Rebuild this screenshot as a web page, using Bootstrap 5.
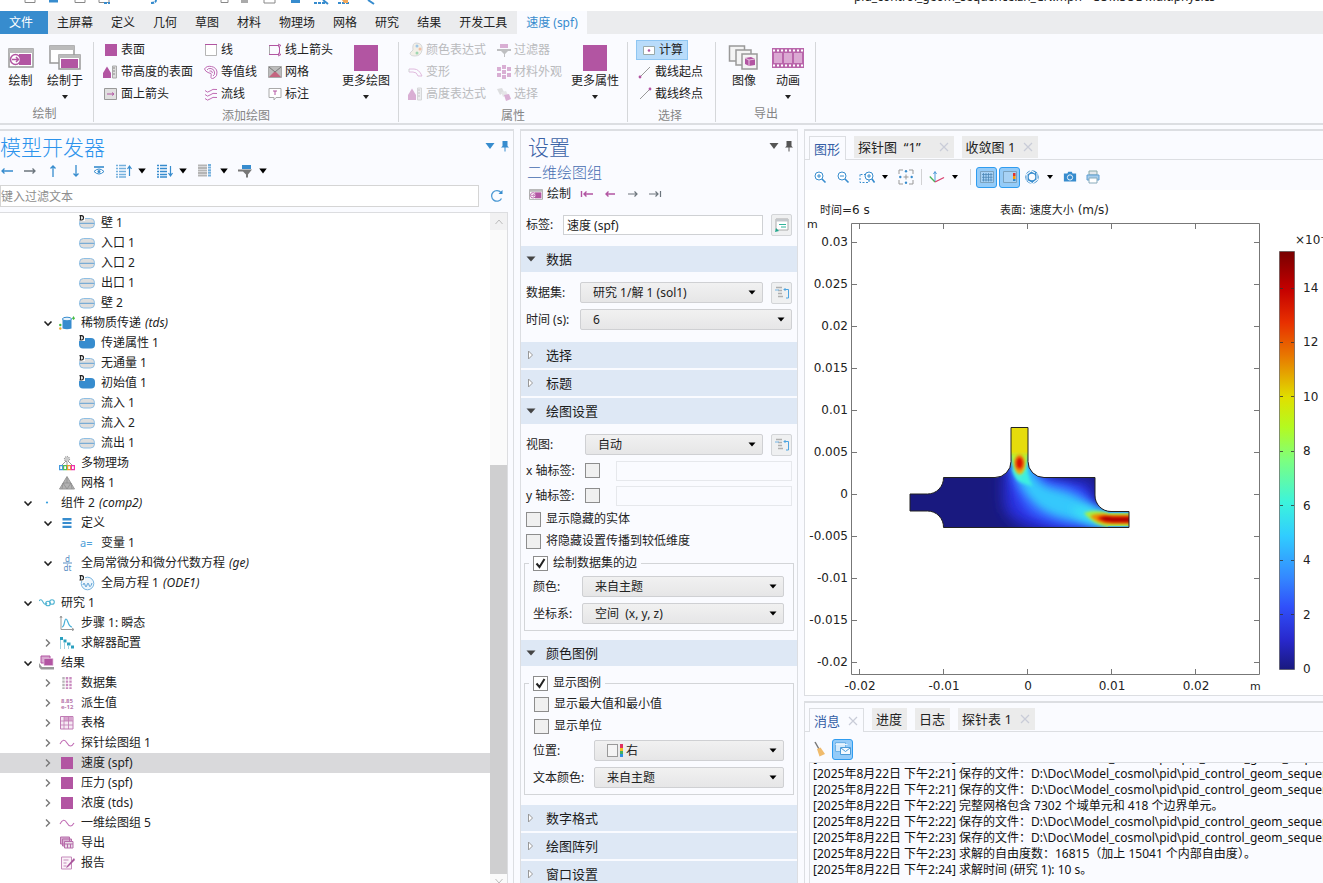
<!DOCTYPE html>
<html lang="zh-CN">
<head>
<meta charset="utf-8">
<meta name="viewport" content="width=device-width, initial-scale=1">
<title>pid_control_geom_sequence.zh_CN.mph - COMSOL Multiphysics</title>
<link href="https://cdn.jsdelivr.net/npm/bootstrap@5.3.0/dist/css/bootstrap.min.css" rel="stylesheet">
<style>
:root{--ui:"Noto Sans","Noto Sans CJK SC",sans-serif;--line:#dcdee2;--bg:#fafbff;--blue:#378cce;--mag:#b255a2;--navy:#3b62a6}
body{font-family:var(--ui);font-size:12px;line-height:16px;color:#222;background:var(--bg)}
button,input,select{font:inherit;color:inherit}
button{border:0;background:none;padding:0}
svg{display:block;flex:none}
.i16{width:16px;height:16px}
.i14{width:14px;height:14px}
.i18{width:18px;height:14px}
.i13{width:14px;height:11px}
.car{width:8px;height:8px}
.car10{width:10px;height:10px}
.car12{width:12px;height:12px}
.pinbox{width:10px;height:12px}
.titlebar{height:11px;background:#fff}
.quick{height:7px;width:390px;margin-left:13px}
.doc{margin-right:108px;line-height:16px;height:16px;margin-top:-11px}
.tabstrip{height:23px;background:#ebecee}
.rtab{padding:0 9px;line-height:23px;color:#222}
.rtab.file{background:var(--blue);color:#fff;width:48px;text-align:left}
.rtab.cur{background:var(--bg);color:var(--blue);margin-left:1px}
.ribbon{height:91px;border-bottom:2px solid var(--line);padding-top:4px}
.grp{display:flex;flex-direction:column;height:80px;border-right:1px solid #d5d7da;margin-top:4px;padding:0 8px}
.grp.first{padding:0 4px 0 0}
.grp.pickers{padding-right:11px}
.grp.out{padding:0 5px 0 6px}
.grp-body{display:flex;height:66px;margin-top:-3px}
.grp-name{color:#858585;text-align:center;line-height:16px;margin-top:3px}
.cmds{display:grid;grid-template-rows:repeat(3,22px);grid-auto-flow:column;justify-content:start;column-gap:8px}
.cmd{display:flex;align-items:center;gap:2px;height:22px;padding:0 1px;white-space:nowrap}
.cmd:disabled{color:#b9babd}
.cmd:disabled svg{opacity:.45}
.cmd.on{background:#b9dcfa;border:1px solid #8fc6f2;height:20px;margin-top:1px;width:52px;padding:0 4px}
.big{display:flex;flex-direction:column;align-items:center;white-space:nowrap;padding-top:6px;width:48px}
.big.w41{width:41px}.big.w44{width:44px}
.big .pic{width:32px;height:26px;margin-bottom:2px}
.big .car{margin-top:4px}
.work{display:grid;grid-template-columns:minmax(0,514fr) minmax(0,278fr) minmax(0,519fr);gap:6px;margin-top:4px;min-height:0}
.pane{border:1px solid var(--line);border-top-width:2px;overflow:hidden;min-width:0;min-height:0}
.ptitle{font-size:21px;line-height:28px;font-weight:300;margin:2px 0 0}
.phead{display:flex;justify-content:space-between;padding-right:3px}
.pbtns{display:flex;gap:4px;margin-top:9px}
.treepane{border-left:0;border-bottom:0}
.treepane .phead,.ttools{color:var(--blue)}
.treepane .ptitle{color:#2c93ec}
.ttools{height:20px;align-items:center;gap:9px}
.drop{display:flex;align-items:center;gap:4px;color:#000}
.frowtop{display:flex;align-items:center;gap:11px;padding-right:9px;margin:4px 0 5px}
.filter{height:22px;border:1px solid #d5d5d5;border-radius:0;padding:0;background:#fff;width:100px;flex:1 1 auto}
.filter::placeholder{color:#8e8e8e}
.treebox{border:1px solid #dcdde0;border-left:0;border-bottom:0;background:#fff;margin-right:5px;min-height:0}
.tree{list-style:none;margin:0;padding:0;overflow:hidden}
.tree li{display:flex;align-items:center;height:20px;white-space:nowrap}
.tree li.sel{background:#d9d9db}
.tree li>svg{margin-right:6px}
.tree i{margin-left:4px}
.tree .tw{width:20px;height:20px;margin:0;padding:5px 6px 5px 4px}
.l1{padding-left:19px}.l2{padding-left:39px}.l3{padding-left:59px}
.tree li>svg:first-child:not(.tw){margin-left:20px}
.sbar{width:17px;background:#fafafa}
.sbar .cap{height:17px;background:#f1f1f2}
.sbar .gap1{flex:236}.sbar .thumb{flex:410;background:#cfcfd0}.sbar .endcap{height:9px}
.prop{overflow:hidden;border-bottom:0}
.prop .phead{padding-left:7px;color:#555}
.prop .ptitle{color:var(--navy)}
.sub{color:#446bb0;font-size:15px;line-height:23px;font-weight:300;padding-left:6px}
.ptools{display:flex;align-items:center;height:20px;padding-left:8px;gap:9px;color:var(--mag)}
.ptools .text-secondary{margin-right:-1px}
.sec{height:26px;margin-bottom:2px;background:#dee8f5;font-size:13px;line-height:26px;padding:0 5px;color:#1c1c1c;width:100%;text-align:left;display:flex;align-items:center;gap:10px}
.sbody{padding:5px 0 9px}
.sbody.lead7{padding:7px 0 10px}
.frow{display:flex;align-items:center;padding:0 5px}
.frow label{flex:none}
.w1{width:37px}.w2{width:54px}.w3{width:59px}.w4{width:49px}.w5{width:61px}
.h42{height:42px}.h27{height:27px}.h25{height:25px}.h22{height:22px}
.frow.tick{gap:5px}
.txt{height:20px;border:1px solid #cfd1d4;background:#fff;padding:0 3px;min-width:0;flex:1;border-radius:0}
.txt:disabled{background:var(--bg);border-color:#e6e8ec}
.sel1{height:21px;flex:1;min-width:0;appearance:none;border:1px solid #cfd0d3;border-radius:2px;padding:0 20px 0 12px;background:url("data:image/svg+xml,%3Csvg xmlns='http://www.w3.org/2000/svg' width='8' height='5'%3E%3Cpath d='M.5 .5h7L4 4.5z'/%3E%3C/svg%3E") no-repeat right 6px center,linear-gradient(#f1f1f1,#e6e6e7)}
.sel1.legend-pos{padding-left:31px;background:url("data:image/svg+xml,%3Csvg xmlns='http://www.w3.org/2000/svg' width='8' height='5'%3E%3Cpath d='M.5 .5h7L4 4.5z'/%3E%3C/svg%3E") no-repeat right 6px center,url("data:image/svg+xml,%3Csvg xmlns='http://www.w3.org/2000/svg' width='16' height='13'%3E%3Crect x='.5' y='.5' width='10' height='12' fill='%23f4f4f4' stroke='%23999'/%3E%3Cpath fill='%23e03060' d='M13 0h3v4h-3z'/%3E%3Cpath fill='%23f0c020' d='M13 4h3v3h-3z'/%3E%3Cpath fill='%2340b060' d='M13 7h3v3h-3z'/%3E%3Cpath fill='%233090e0' d='M13 10h3v3h-3z'/%3E%3C/svg%3E") no-repeat 12px center,linear-gradient(#f1f1f1,#e6e6e7)}
.gbtn{width:21px;height:22px;border:1px solid #d3d5d8;border-radius:2px;background:#eff0f1;display:flex;align-items:center;justify-content:center;margin-left:8px;flex:none}
.ck{appearance:none;width:15px;height:15px;margin:0;border:1px solid #8d8d8d;background:#f0f0f0;flex:none}
.ck:checked{background:#fff url("data:image/svg+xml,%3Csvg xmlns='http://www.w3.org/2000/svg' width='13' height='13'%3E%3Cpath d='M2.500 6.500l3 3.500 5-8' fill='none' stroke='%23222' stroke-width='2'/%3E%3C/svg%3E")}
.fs{border:1px solid #d3d5d8;margin:0 3px;padding:2px 9px 3px 8px;min-width:0}
.edges{margin-top:3px}
.fs legend{float:none;width:auto;font-size:12px;line-height:16px;margin:0 0 0 -4px;padding:0 4px;display:flex;align-items:center;gap:5px;background:var(--bg)}
.fs .frow{padding:0}
.fs .tick{padding-left:1px}
.tabs2{display:flex;align-items:flex-end;height:29px;border-bottom:1px solid var(--line);padding-left:4px;font-size:13px;gap:8px;flex:none}
.tb{background:#ebebeb;height:22px;padding:0 5px 0 4px;white-space:nowrap;display:flex;align-items:center;margin-bottom:1px;color:#222;line-height:22px}
.tb.cur{background:var(--bg);border:1px solid var(--line);border-bottom:0;height:24px;margin-bottom:-1px;color:#355ea6}
.tb svg{width:10px;height:10px;margin-left:8px}
.tb .far{margin-left:18px}
.gtools{height:30px;display:flex;align-items:center;padding:4px 6px 0 8px;gap:9px}
.gtools .drop{gap:6px}
.gtools .toggles{display:flex;gap:2px}
.gtools .after{margin-left:-5px}
.mtools{height:30px;display:flex;align-items:center;padding:4px 0 0 7px;gap:4px}
.tog{width:21px;height:21px;border:1px solid #2f9cf0;border-radius:3px;background:#94cbf8;display:flex;align-items:center;justify-content:center}
.vsep{width:1px;height:16px;background:#d2d2d4;margin:0 -2px}
.vsep.wide{margin:0 -4px 0 2px}
.plot{background:#fff;min-height:0}
.plot text{font-family:"DejaVu Sans","Noto Sans CJK SC",sans-serif;font-size:12px;fill:#222}
.plot .zh,.plot .unit{font-size:11px}
.plot .sup{font-size:9px}
.rightcol{display:grid;grid-template-rows:568fr 182fr;gap:5px;min-height:0}
.log{border:1px solid var(--line);border-width:1px 0 0 1px;margin-left:4px;padding:0 3px 5px;overflow:hidden;display:flex;flex-direction:column;justify-content:flex-end;color:#111;min-height:0}
.log div{white-space:nowrap;line-height:16px;flex:none}
</style>
<script src="https://cdn.jsdelivr.net/npm/bootstrap@5.3.0/dist/js/bootstrap.bundle.min.js"></script>
</head>
<body class="vh-100 overflow-hidden d-flex flex-column">
<svg width="0" height="0" class="position-absolute" aria-hidden="true">
<defs>
<symbol id="car" viewBox="0 0 8 8"><path d="M1 2h6L4 6z" fill="currentColor"/></symbol>
<symbol id="carR" viewBox="0 0 10 10"><path d="M2.500 1v8L6.500 5z" fill="#fff" stroke="#999"/></symbol>
<symbol id="carD" viewBox="0 0 10 10"><path d="M.5 2.500h9L5 7.500z" fill="#444"/></symbol>
<symbol id="pin" viewBox="0 0 10 12"><path d="M2.500 1h5v5l1.500 1.500H1L2.500 6zM4.500 7h1v4.500h-1z" fill="currentColor"/></symbol>
<symbol id="open" viewBox="0 0 10 10"><path d="M1.500 3.500 5 7l3.500-3.500" fill="none" stroke="#222" stroke-width="1.600"/></symbol>
<symbol id="shut" viewBox="0 0 10 10"><path d="M3 1.500 6.500 5 3 8.500" fill="none" stroke="#777" stroke-width="1.400"/></symbol>
<symbol id="bd" viewBox="0 0 16 16"><rect x=".5" y="3.500" width="15" height="9.500" rx="4" fill="#dedede" stroke="#8fbfe4"/><path d="M1 8.300h14" stroke="#5f9fd2"/></symbol>
<symbol id="dd" viewBox="0 0 16 16"><path d="M0 0h6v6H0z" fill="#fff"/><path d="M1.500.7v4.300M.5.700h2.200q1.800 0 1.800 2.100t-1.800 2.200H.5" fill="none" stroke="#222" stroke-width="1.200"/></symbol>
<symbol id="bdd" viewBox="0 0 16 16"><use href="#bd"/><use href="#dd"/></symbol>
<symbol id="dom" viewBox="0 0 16 16"><rect y="3" width="16" height="10.500" rx="4" fill="var(--blue)"/><use href="#dd"/></symbol>
<symbol id="tds" viewBox="0 0 16 16"><path d="M3.500 3.500v10q4.500 1.500 9 0v-10z" fill="var(--blue)"/><ellipse cx="8" cy="4" rx="4.500" ry="1.800" fill="#e6f2fb" stroke="var(--blue)"/><circle cx="1.300" cy="10" r="1.200" fill="#4b4"/><circle cx="1.300" cy="13.500" r="1.200" fill="#ea3"/><path d="m14.500 1 1.500 2.500-1.500 1.500-1.500-1.500z" fill="#4b4"/></symbol>
<symbol id="mp" viewBox="0 0 16 16"><circle cx="8" cy="4" r="2.600" fill="#ccc" stroke="#888" stroke-dasharray="1 1"/><path d="M3 10 7 6m2 0 4 4M8 7v3" stroke="#999"/><g fill="#fff" stroke-width="1.200"><path d="M.6 10.600h3v4h-3z" stroke="#49d"/><path d="M4.600 10.600h3v4h-3z" stroke="#5b5"/><path d="M8.600 10.600h3v4h-3z" stroke="#e93"/><path d="M12.400 10.600h3v4h-3z" stroke="#e3a"/></g></symbol>
<symbol id="mesh" viewBox="0 0 16 16"><path d="M8 1.500 15.500 14H.5z" fill="#b2b2b2" stroke="#999"/><path d="M4 8l4 6 4-6zM8 2v6M4 8l-1 6m9-6 1 6" fill="none" stroke="#8a8a8a" stroke-width=".7"/></symbol>
<symbol id="dot" viewBox="0 0 16 16"><circle cx="8" cy="7.500" r="1.100" fill="#38a0e0"/></symbol>
<symbol id="defs" viewBox="0 0 16 16"><path d="M3.500 3h9v2.500h-9zM3.500 7h9v2h-9zM3.500 10.800h9V13h-9z" fill="var(--blue)"/></symbol>
<symbol id="aeq" viewBox="0 0 16 16"><text x="1" y="12" font-size="11" fill="#4f9fd8">a=</text></symbol>
<symbol id="ddt" viewBox="0 0 16 16"><path d="M4 8h9" stroke="#5a8fc4"/><text x="6" y="6.800" font-size="8" fill="#5a8fc4">d</text><text x="4.500" y="15.500" font-size="8" fill="#5a8fc4">dt</text></symbol>
<symbol id="ode" viewBox="0 0 16 16"><circle cx="8.500" cy="8.500" r="6.300" fill="#eef6fc" stroke="#78b4e0"/><path d="M4 10q1-4 2 0t2 0q1-4 2 0t3-2" fill="none" stroke="#5a9fd4"/><use href="#dd"/></symbol>
<symbol id="study" viewBox="0 0 16 16"><g fill="none" stroke="#4fb3d2" stroke-width="1.100"><path d="M0 6q2-3 4 1t4 1"/><circle cx="9" cy="8.500" r="2.300"/><circle cx="13" cy="7" r="2.300"/></g></symbol>
<symbol id="step" viewBox="0 0 16 16"><path d="M2 1v13.500h13" fill="none" stroke="#999"/><path d="M3 12C6 12 5 4 7 4s2 8 6 8" fill="none" stroke="#49b0d8" stroke-width="1.200"/><path d="m1 3 1-2 1 2m10 10 2 1.500-2 1.500" fill="none" stroke="#999"/></symbol>
<symbol id="solv" viewBox="0 0 16 16"><path d="M1 2h3v3H1zM4.500 4.500h3v3h-3zM8 7.500h3.500v3H8zM12 10.500h3v3h-3z" fill="#2aa0bf"/><path d="M1.500 5v9m4-6v6m4-4v4" stroke="#9fd2e0"/></symbol>
<symbol id="res" viewBox="0 0 16 16"><path d="M2 1h9v7H2z" fill="#d9a8d1" stroke="#b255a2"/><path d="M5 3.500h9v7H5z" fill="#b255a2" stroke="#e3c0dd" stroke-width=".7"/><path d="M0 8l3 4h12v2.500H2L0 12z" fill="#999"/></symbol>
<symbol id="dset" viewBox="0 0 16 16"><g stroke-width="2.400" stroke-dasharray="2.400 1"><path d="M4.500 2v12" stroke="#b5b5b5"/><path d="M8 2v12M11.500 2v12" stroke="#c98bbf"/></g></symbol>
<symbol id="dval" viewBox="0 0 16 16"><text x="2" y="7.500" font-size="6" font-weight="700" fill="#b878ac">8.85</text><text x="2" y="13.500" font-size="6" font-weight="700" fill="#b878ac">e-12</text></symbol>
<symbol id="tbl" viewBox="0 0 16 16"><path d="M1.500 1.500h12.500V14H1.500z" fill="#f6eaf4" stroke="#c07bb4"/><path d="M5 2h9v4H5z" fill="#d7a5ce"/><path d="M5 2v12M9.500 2v12M2 6h12M2 10h12" stroke="#c07bb4" stroke-width=".8"/></symbol>
<symbol id="wave" viewBox="0 0 16 16"><path d="M1 9q3.500-7 7-1t7 0" fill="none" stroke="#c06cb4" stroke-width="1.100"/></symbol>
<symbol id="sq" viewBox="0 0 16 16"><path d="M2 2h12v12H2z" fill="#b255a2"/></symbol>
<symbol id="exp" viewBox="0 0 16 16"><path d="M1.500 2h9v7h-9zM3.500 4h9v7h-9z" fill="#d9aed2" stroke="#b66daa"/><path d="M5.500 6.500H14V13H5.500z" fill="#eadde8" stroke="#b66daa"/><path d="M6 9h8M8.500 9v4M11.500 9v4" stroke="#b66daa"/></symbol>
<symbol id="rep" viewBox="0 0 16 16"><path d="M2.500 2h10v12h-10z" fill="#faf2f8" stroke="#c58abb"/><path d="M4.500 5h5m-5 3h3m-3 3h3" stroke="#c58abb"/><path d="m15 3-7 8-1 2 2-1 7-7z" fill="#a9569c"/></symbol>
<symbol id="draw" viewBox="0 0 26 20"><path d="M1 1h24v18H1z" fill="#fff" stroke="#999" stroke-width="1.500"/><path d="M1 1h24v4H1z" fill="#bbb"/><path d="M11 6h12v11H11z" fill="#b255a2"/><circle cx="7.500" cy="11.500" r="5" fill="#fff" stroke="#b255a2" stroke-width="1.500"/><path d="M4 11.500h6M8 9l2.500 2.500L8 14" fill="none" stroke="#b255a2" stroke-width="1.500"/></symbol>
<symbol id="drawin" viewBox="0 0 32 26"><path d="M1 1h24v17H1z" fill="#fff" stroke="#999" stroke-width="1.500"/><path d="M1 1h24v4H1z" fill="#bbb"/><path d="M10 10h21v14H10z" fill="#fff" stroke="#999" stroke-width="1.500"/><path d="M10 10h21v3H10z" fill="#bbb"/><path d="M12 14h17v9H12z" fill="#b255a2"/></symbol>
<symbol id="hsurf" viewBox="0 0 16 16"><path d="M0 14V9l4-6.500L8 9v5z" fill="#b255a2"/><path d="M9.500 2h4v12h-4z" fill="#ddd" stroke="#aaa"/><path d="M10 4h2m-2 3h2m-2 3h2" stroke="#888"/></symbol>
<symbol id="arrs" viewBox="0 0 16 16"><path d="M1.500 2.500h12v11h-12z" fill="#e0e0e0" stroke="#999"/><path d="M4 8h6M9 6.500l2 1.500-2 1.500" fill="none" stroke="#b255a2"/></symbol>
<symbol id="linei" viewBox="0 0 16 16"><path d="M2.500 2.500h11v11h-11z" fill="#fff" stroke="#b5b5b5"/><path d="M2 2.500h12" stroke="#b255a2"/></symbol>
<symbol id="cont" viewBox="0 0 16 16"><g fill="none" stroke="#c06cb4"><path d="M1.500 5q2-3.500 7-2.500t5.500 5.500-3 6-3-1.500 0-3-3-1-3.500-3.500z"/><path d="M4 6q1-2 4-1.500t3.500 3.500-1.500 4"/><path d="M6.500 7q2.500-1 3 2"/></g></symbol>
<symbol id="strm" viewBox="0 0 16 16"><path d="M2 4.500q2.500 3 5 .5t7-1.500M2 8.500q2.500 3 5 .5t7-1.500M2 12.500q2.500 3 5 .5t7-1.500" fill="none" stroke="#c06cb4"/></symbol>
<symbol id="larr" viewBox="0 0 16 16"><path d="M2.500 3.500v9" stroke="#aaa"/><path d="M2 3.500h10M2 12.500h10M11 2l3 1.500L11 5m0 6 3 1.500-3 1.500M12.500 5v6" stroke="#b255a2" fill="none"/></symbol>
<symbol id="grid" viewBox="0 0 16 16"><path d="M1.500 2.500h13v11h-13z" fill="#bcbcbc" stroke="#aaa"/><path d="m2 13 6-6 6 6z" fill="#c4647f"/><path d="m2 3 6 5 6-5" fill="none" stroke="#777"/></symbol>
<symbol id="note" viewBox="0 0 16 16"><path d="M2 2.500h12v9H9l-2 2.500v-2.500H2z" fill="#fff" stroke="#aaa"/><path d="M6 5h4M8 5v4" stroke="#b255a2"/></symbol>
<symbol id="pal" viewBox="0 0 16 16"><path d="M8 1q7 0 6 7-1 6-7 6-5 0-5-3l3-3q-1-7 3-7z" fill="#e9e2cc" stroke="#aaa"/><circle cx="9" cy="4" r="1.500" fill="#38c"/><circle cx="12" cy="7" r="1.500" fill="#e73"/><circle cx="9" cy="11" r="1.500" fill="#3a5"/></symbol>
<symbol id="defm" viewBox="0 0 16 16"><path d="M1 5h5q5 0 8 7M1 8h4q4 0 5 4h4" fill="none" stroke="#c06cb4"/><path d="M1 5v3" stroke="#999"/></symbol>
<symbol id="filt" viewBox="0 0 16 16"><path d="M4 2h8v4H4z" fill="#b255a2"/><path d="M1 7h14v2h-3l-3 3v3H8v-3L5 9H1z" fill="#777"/></symbol>
<symbol id="mat" viewBox="0 0 16 16"><path d="M6 1h4v4H6zM1 3h4v4H1zM11 3h4v4h-4zM6 6h4v4H6zM1 9h4v4H1zM11 9h4v4h-4zM6 11h4v4H6z" fill="#b255a2"/></symbol>
<symbol id="pick" viewBox="0 0 16 16"><path d="M1 3l5-1 2 4-4 3z" fill="#bbb"/><path d="m5 6 5-1 2 4-5 2z" fill="#ccc"/><path d="m8 9 5-1 2 5-5 2z" fill="#b255a2"/></symbol>
<symbol id="calc" viewBox="0 0 16 16"><path d="M2.500 4.500h11v8h-11z" fill="#fff" stroke="#9aa"/><circle cx="8" cy="8.500" r="1.300" fill="#b255a2"/></symbol>
<symbol id="cutA" viewBox="0 0 16 16"><path d="M3 13 13 3" stroke="#999"/><circle cx="3" cy="13" r="1.400" fill="#b255a2"/></symbol>
<symbol id="cutB" viewBox="0 0 16 16"><path d="M3 13 13 3" stroke="#999"/><circle cx="13" cy="3" r="1.400" fill="#b255a2"/></symbol>
<symbol id="img" viewBox="0 0 32 26"><g fill="#f4f4f4" stroke="#999" stroke-width="1.500"><path d="M1.500 1h15v15h-15z"/><path d="M8 5h15v15H8z"/><path d="M14 9h15v15H14z"/></g><path d="m17 13 6-1 4 2v6l-6 1-4-2z" fill="#b255a2"/><path d="m17 13 4 2v6m0-6 6-1" fill="none" stroke="#e8c6e2"/></symbol>
<symbol id="film" viewBox="0 0 32 22"><path d="M0 1h32v20H0z" fill="#b966ab"/><path d="M2 6h8v10H2zM12 6h8v10h-8zM22 6h8v10h-8z" fill="#dba9d3"/><path d="M1 3.500h31M1 18.500h31" stroke="#fff" stroke-width="2" stroke-dasharray="2 2"/></symbol>
<symbol id="al" viewBox="0 0 14 14"><path d="M13 7H2M4.500 4.500 2 7l2.500 2.500" fill="none" stroke="currentColor" stroke-width="1.300"/></symbol>
<symbol id="ar" viewBox="0 0 14 14"><path d="M1 7h11M9.500 4.500 12 7l-2.500 2.500" fill="none" stroke="currentColor" stroke-width="1.300"/></symbol>
<symbol id="afirst" viewBox="0 0 14 14"><path d="M1.500 4v6M13 7H4M6.500 4.500 4 7l2.500 2.500" fill="none" stroke="currentColor" stroke-width="1.400"/></symbol>
<symbol id="aprev" viewBox="0 0 14 14"><path d="M12 7H3M5.500 4.500 3 7l2.500 2.500" fill="none" stroke="currentColor" stroke-width="1.400"/></symbol>
<symbol id="anext" viewBox="0 0 14 14"><path d="M2 7h9M8.500 4.500 11 7l-2.500 2.500" fill="none" stroke="currentColor" stroke-width="1.200"/></symbol>
<symbol id="alast" viewBox="0 0 14 14"><path d="M12.500 4v6M1 7h9M7.500 4.500 10 7l-2.500 2.500" fill="none" stroke="currentColor" stroke-width="1.200"/></symbol>
<symbol id="au" viewBox="0 0 14 14"><path d="M7 13V2M4.500 4.500 7 2l2.500 2.500" fill="none" stroke="currentColor" stroke-width="1.300"/></symbol>
<symbol id="ad" viewBox="0 0 14 14"><path d="M7 1v11M4.500 9.500 7 12l2.500-2.500" fill="none" stroke="currentColor" stroke-width="1.300"/></symbol>
<symbol id="eye" viewBox="0 0 14 14"><path d="M2 3h10" stroke="var(--blue)" stroke-width="1.600"/><path d="M2 7.500q5-5 10 0-5 5-10 0z" fill="#fff" stroke="var(--blue)"/><circle cx="7" cy="7.500" r="1.500" fill="var(--blue)"/></symbol>
<symbol id="lu" viewBox="0 0 16 14"><path d="M0 1.500h10M0 4.500h10M0 7.500h10M0 10.500h10M0 13h10" stroke="#74b0dd" stroke-width="1.500" stroke-dasharray="2 1 20 0"/><path d="M13.500 12V2m-2 3 2-3 2 3" fill="none" stroke="var(--blue)" stroke-width="1.200"/></symbol>
<symbol id="ld" viewBox="0 0 16 14"><path d="M0 1.500h10M0 4.500h10M0 7.500h10M0 10.500h10M0 13h10" stroke="var(--blue)" stroke-width="1.500" stroke-dasharray="2 1 20 0"/><path d="M13.500 2v10m-2-3 2 3 2-3" fill="none" stroke="var(--blue)" stroke-width="1.200"/></symbol>
<symbol id="cols" viewBox="0 0 16 14"><path d="M0 1.500h9M0 4h9M0 6.500h9M0 9h9M0 11.500h9" stroke="#b5b5b5" stroke-width="2"/><path d="M11.500 0v13" stroke="#74b0dd" stroke-width="3" stroke-dasharray="2 .6"/></symbol>
<symbol id="fun" viewBox="0 0 16 16"><path d="M4 2h9v4H4z" fill="var(--blue)"/><path d="M0 6.500h14l-4 5v3H8v-3L5 8.500H0z" fill="#777"/></symbol>
<symbol id="ref" viewBox="0 0 14 14"><path d="M11.500 9.500A5.300 5.300 0 1 1 11 3.500" fill="none" stroke="#4e9ad4" stroke-width="1.300"/><path d="M12.500 1v4h-4z" fill="#378cce"/></symbol>
<symbol id="x" viewBox="0 0 10 10"><path d="m1 1 8 8m0-8-8 8" stroke="#c9ccd8" stroke-width="1.200"/></symbol>
<symbol id="zi" viewBox="0 0 14 14"><circle cx="6" cy="6" r="4" fill="#fff" stroke="var(--blue)"/><path d="M4 6h4M6 4v4" stroke="var(--blue)"/><path d="m9 9 3.500 3.500" stroke="var(--blue)" stroke-width="1.600"/></symbol>
<symbol id="zo" viewBox="0 0 14 14"><circle cx="6" cy="6" r="4" fill="#fff" stroke="var(--blue)"/><path d="M4 6h4" stroke="var(--blue)"/><path d="m9 9 3.500 3.500" stroke="var(--blue)" stroke-width="1.600"/></symbol>
<symbol id="zb" viewBox="0 0 16 14"><path d="M1 4.500v8h9v-8z" fill="none" stroke="var(--blue)" stroke-dasharray="2 1.500"/><circle cx="10" cy="6" r="4" fill="#fff" stroke="var(--blue)"/><path d="M8 6h4m-2-2v4" stroke="var(--blue)"/><path d="m13 9 2.500 3.500" stroke="var(--blue)" stroke-width="1.600"/></symbol>
<symbol id="fit" viewBox="0 0 16 16"><path d="M1 5V1h4m6 0h4v4m0 6v4h-4m-6 0H1v-4M5.500 8h5M8 5.500v5" fill="none" stroke="#999"/><circle cx="8" cy="2.300" r="1.200" fill="var(--blue)"/><circle cx="8" cy="13.700" r="1.200" fill="var(--blue)"/><circle cx="2.300" cy="8" r="1.200" fill="var(--blue)"/><circle cx="13.700" cy="8" r="1.200" fill="var(--blue)"/></symbol>
<symbol id="axs" viewBox="0 0 16 16"><path d="M6 13V3M4.500 5 6 2.500l1.500 2.500" fill="none" stroke="#4c9bd8"/><path d="M6 13 .8 7.500" stroke="#4bb35a" stroke-width="1.300"/><path d="m6 13 9-4.500" stroke="#d84070" stroke-width="1.300"/></symbol>
<symbol id="tg" viewBox="0 0 16 16"><path d="M1.500 2.500h13v11h-13z" fill="#a8d2f5" stroke="#7aa2c0"/><path d="M4.500 4v8.500M7 4v8.500M9.500 4v8.500M12 4v8.500M3 5.500h10.500M3 8.300h10.500M3 11h10.500" stroke="#4d88b8" stroke-width=".8"/></symbol>
<symbol id="tl" viewBox="0 0 16 16"><path d="M1.500 2.500h13v11h-13z" fill="#a8d2f5" stroke="#7aa2c0"/><path d="M11 4h2.500v3H11z" fill="#d33"/><path d="M11 7h2.500v3H11z" fill="#f90"/><path d="M11 10h2.500v2H11z" fill="#38c"/></symbol>
<symbol id="aper" viewBox="0 0 16 16"><circle cx="8" cy="8" r="5" fill="none" stroke="var(--blue)" stroke-width="3.500"/><path d="M6 1l5 3M13 4v6M14 10l-5 4M9 15l-5-3M3 12V6M2 6l5-4" stroke="var(--bg)" stroke-width="1.100"/></symbol>
<symbol id="cam" viewBox="0 0 16 14"><path d="M1 3h4l1-2h4l1 2h4v9H1z" fill="var(--blue)"/><circle cx="8" cy="7.500" r="3" fill="var(--blue)" stroke="#fff"/></symbol>
<symbol id="prn" viewBox="0 0 14 14"><path d="M3 1h8v4H3z" fill="#e4e8ec" stroke="#8aa"/><path d="M1 5h12v5H1z" fill="#a6cdec" stroke="#5f9fd2"/><path d="M3 8h8v5H3z" fill="#fff" stroke="#8ab"/></symbol>
<symbol id="broom" viewBox="0 0 16 16"><path d="m3 1 4 7" stroke="#777" stroke-width="1.500"/><path d="m5 8 3.500-1.500L13 13l-5.500 2.500z" fill="#f0bb6c"/></symbol>
<symbol id="mail" viewBox="0 0 16 16"><path d="M.5 1.500h10v9H.5z" fill="#d4eafb" stroke="#6fb2e6"/><path d="M.5 3.500h12" stroke="#e8f4fd"/><path d="M5.500 6.500h10v7h-10z" fill="#f4faff" stroke="#4b9bd8"/><path d="m6 7 4.500 3.500L15 7" fill="none" stroke="#4b9bd8"/></symbol>
<symbol id="gos" viewBox="0 0 16 16"><path d="M2 2h12v11H2z" fill="#fff" stroke="#aaa"/><path d="M2 2h12v2.500H2z" fill="#c4c8cc"/><path d="M5 7.500h7M7 10h5" stroke="#33b39a"/><path d="m1 15 1-4 3 3z" fill="#1fa58a"/></symbol>
<symbol id="gol" viewBox="0 0 16 16"><path d="M2 2.500h6M4 5.500h4M4 8.500h4M4 11.500h5" stroke="#b0b0b0" stroke-width="1.600"/><path d="M1 5h4" stroke="#77b5e4"/><path d="M10 4.500h4.500v8.500H12M11.500 3 10 4.500 11.500 6" fill="none" stroke="#4ea4e0"/></symbol>
</defs></svg>

<header class="titlebar d-flex flex-shrink-0 overflow-hidden justify-content-between align-items-start">
<svg class="quick" viewBox="13 0 390 7"><g fill="none" stroke="#378cce"><path d="M25 0v2.500h10V0M75 0v2.500h10V0M99 0v2.500h10V0M221 0v2.500h7V0M264 0v3h11V0" stroke="#888"/><path d="M49 1h9" stroke-width="3"/><path d="M104 3h6M151 3q5 0 5-3M314 3h11m13 0h12" stroke-width="2" stroke-dasharray="3 1"/><path d="m323 0 5 4m40-4 6 4" stroke-width="2"/></g><path d="M291 0h9v3h-9z" fill="#378cce"/><path d="M342 0h6v3h-4z" fill="#f3a85a"/><path d="M241 0h7v3h-7z" fill="#aaa"/></svg>
<div class="doc text-nowrap">pid_control_geom_sequence.zh_CN.mph - COMSOL Multiphysics</div>
</header>
<nav class="tabstrip d-flex flex-shrink-0 text-nowrap" aria-label="功能区">
<button class="rtab file">文件</button><button class="rtab">主屏幕</button><button class="rtab">定义</button><button class="rtab">几何</button><button class="rtab">草图</button><button class="rtab">材料</button><button class="rtab">物理场</button><button class="rtab">网格</button><button class="rtab">研究</button><button class="rtab">结果</button><button class="rtab">开发工具</button><button class="rtab cur">速度 (spf)</button>
</nav>
<section class="ribbon d-flex flex-shrink-0">
<div class="grp first"><div class="grp-body"><button class="big w41"><svg class="pic"><use href="#draw" height="20" width="26" x="3" y="3"/></svg>绘制</button><button class="big"><svg class="pic"><use href="#drawin"/></svg>绘制于<svg class="car"><use href="#car"/></svg></button></div><div class="grp-name">绘制</div></div>
<div class="grp"><div class="grp-body gap-2"><div class="cmds">
<button class="cmd"><svg class="i16"><use href="#sq"/></svg>表面</button><button class="cmd"><svg class="i16"><use href="#hsurf"/></svg>带高度的表面</button><button class="cmd"><svg class="i16"><use href="#arrs"/></svg>面上箭头</button>
<button class="cmd"><svg class="i16"><use href="#linei"/></svg>线</button><button class="cmd"><svg class="i16"><use href="#cont"/></svg>等值线</button><button class="cmd"><svg class="i16"><use href="#strm"/></svg>流线</button>
<button class="cmd"><svg class="i16"><use href="#larr"/></svg>线上箭头</button><button class="cmd"><svg class="i16"><use href="#grid"/></svg>网格</button><button class="cmd"><svg class="i16"><use href="#note"/></svg>标注</button></div>
<button class="big"><svg class="pic"><path d="M4 0h24v26H4z" fill="#b255a2"/></svg>更多绘图<svg class="car"><use href="#car"/></svg></button></div><div class="grp-name">添加绘图</div></div>
<div class="grp"><div class="grp-body gap-2"><div class="cmds">
<button class="cmd" disabled><svg class="i16"><use href="#pal"/></svg>颜色表达式</button><button class="cmd" disabled><svg class="i16"><use href="#defm"/></svg>变形</button><button class="cmd" disabled><svg class="i16"><use href="#hsurf"/></svg>高度表达式</button>
<button class="cmd" disabled><svg class="i16"><use href="#filt"/></svg>过滤器</button><button class="cmd" disabled><svg class="i16"><use href="#mat"/></svg>材料外观</button><button class="cmd" disabled><svg class="i16"><use href="#pick"/></svg>选择</button></div>
<button class="big"><svg class="pic"><path d="M4 0h24v26H4z" fill="#b255a2"/></svg>更多属性<svg class="car"><use href="#car"/></svg></button></div><div class="grp-name">属性</div></div>
<div class="grp pickers"><div class="grp-body"><div class="cmds">
<button class="cmd on"><svg class="i16"><use href="#calc"/></svg>计算</button><button class="cmd"><svg class="i16"><use href="#cutA"/></svg>截线起点</button><button class="cmd"><svg class="i16"><use href="#cutB"/></svg>截线终点</button></div></div><div class="grp-name">选择</div></div>
<div class="grp out"><div class="grp-body"><button class="big w44"><svg class="pic"><use href="#img"/></svg>图像</button><button class="big w44"><svg class="pic"><use href="#film"/></svg>动画<svg class="car"><use href="#car"/></svg></button></div><div class="grp-name">导出</div></div>
</section>

<main class="work flex-grow-1">
<section class="pane treepane d-flex flex-column">
<div class="phead"><h1 class="ptitle">模型开发器</h1><div class="pbtns"><svg class="car12"><use href="#car"/></svg><svg class="pinbox"><use href="#pin"/></svg></div></div>
<div class="d-flex ttools">
<button aria-label="后退"><svg class="i14"><use href="#al"/></svg></button><button aria-label="前进" class="text-secondary"><svg class="i14"><use href="#ar"/></svg></button><button aria-label="上移"><svg class="i14"><use href="#au"/></svg></button><button aria-label="下移"><svg class="i14"><use href="#ad"/></svg></button><button aria-label="显示"><svg class="i14"><use href="#eye"/></svg></button>
<button aria-label="折叠" class="drop"><svg class="i18"><use href="#lu"/></svg><svg class="car10"><use href="#car"/></svg></button>
<button aria-label="展开" class="drop"><svg class="i18"><use href="#ld"/></svg><svg class="car10"><use href="#car"/></svg></button>
<button aria-label="列" class="drop"><svg class="i18"><use href="#cols"/></svg><svg class="car10"><use href="#car"/></svg></button>
<button aria-label="筛选" class="drop"><svg class="i16"><use href="#fun"/></svg><svg class="car10"><use href="#car"/></svg></button>
</div>
<div class="frowtop"><input class="filter" aria-label="过滤" placeholder="键入过滤文本"><button aria-label="刷新"><svg class="i14"><use href="#ref"/></svg></button></div>
<div class="treebox d-flex flex-grow-1">
<ul class="tree flex-grow-1">
<li class="l3"><svg class="i16"><use href="#bdd"/></svg>壁 1</li>
<li class="l3"><svg class="i16"><use href="#bd"/></svg>入口 1</li>
<li class="l3"><svg class="i16"><use href="#bd"/></svg>入口 2</li>
<li class="l3"><svg class="i16"><use href="#bd"/></svg>出口 1</li>
<li class="l3"><svg class="i16"><use href="#bd"/></svg>壁 2</li>
<li class="l2"><svg class="tw"><use href="#open"/></svg><svg class="i16"><use href="#tds"/></svg>稀物质传递<i>(tds)</i></li>
<li class="l3"><svg class="i16"><use href="#dom"/></svg>传递属性 1</li>
<li class="l3"><svg class="i16"><use href="#bdd"/></svg>无通量 1</li>
<li class="l3"><svg class="i16"><use href="#dom"/></svg>初始值 1</li>
<li class="l3"><svg class="i16"><use href="#bd"/></svg>流入 1</li>
<li class="l3"><svg class="i16"><use href="#bd"/></svg>流入 2</li>
<li class="l3"><svg class="i16"><use href="#bd"/></svg>流出 1</li>
<li class="l2"><svg class="i16"><use href="#mp"/></svg>多物理场</li>
<li class="l2"><svg class="i16"><use href="#mesh"/></svg>网格 1</li>
<li class="l1"><svg class="tw"><use href="#open"/></svg><svg class="i16"><use href="#dot"/></svg>组件 2<i>(comp2)</i></li>
<li class="l2"><svg class="tw"><use href="#open"/></svg><svg class="i16"><use href="#defs"/></svg>定义</li>
<li class="l3"><svg class="i16"><use href="#aeq"/></svg>变量 1</li>
<li class="l2"><svg class="tw"><use href="#open"/></svg><svg class="i16"><use href="#ddt"/></svg>全局常微分和微分代数方程<i>(ge)</i></li>
<li class="l3"><svg class="i16"><use href="#ode"/></svg>全局方程 1<i>(ODE1)</i></li>
<li class="l1"><svg class="tw"><use href="#open"/></svg><svg class="i16"><use href="#study"/></svg>研究 1</li>
<li class="l2"><svg class="i16"><use href="#step"/></svg>步骤 1: 瞬态</li>
<li class="l2"><svg class="tw"><use href="#shut"/></svg><svg class="i16"><use href="#solv"/></svg>求解器配置</li>
<li class="l1"><svg class="tw"><use href="#open"/></svg><svg class="i16"><use href="#res"/></svg>结果</li>
<li class="l2"><svg class="tw"><use href="#shut"/></svg><svg class="i16"><use href="#dset"/></svg>数据集</li>
<li class="l2"><svg class="tw"><use href="#shut"/></svg><svg class="i16"><use href="#dval"/></svg>派生值</li>
<li class="l2"><svg class="tw"><use href="#shut"/></svg><svg class="i16"><use href="#tbl"/></svg>表格</li>
<li class="l2"><svg class="tw"><use href="#shut"/></svg><svg class="i16"><use href="#wave"/></svg>探针绘图组 1</li>
<li class="l2 sel"><svg class="tw"><use href="#shut"/></svg><svg class="i16"><use href="#sq"/></svg>速度 (spf)</li>
<li class="l2"><svg class="tw"><use href="#shut"/></svg><svg class="i16"><use href="#sq"/></svg>压力 (spf)</li>
<li class="l2"><svg class="tw"><use href="#shut"/></svg><svg class="i16"><use href="#sq"/></svg>浓度 (tds)</li>
<li class="l2"><svg class="tw"><use href="#shut"/></svg><svg class="i16"><use href="#wave"/></svg>一维绘图组 5</li>
<li class="l2"><svg class="i16"><use href="#exp"/></svg>导出</li>
<li class="l2"><svg class="i16"><use href="#rep"/></svg>报告</li>
</ul>
<div class="sbar d-flex flex-column"><div class="cap d-flex align-items-center justify-content-center"><svg width="8" height="8"><path d="m.5 6 3.500-4 3.500 4" fill="none" stroke="#bbb"/></svg></div><div class="gap1"></div><div class="thumb"></div><div class="endcap d-flex justify-content-center align-items-end"><svg width="8" height="6"><path d="m.5 2 3.500 4 3.500-4" fill="none" stroke="#bbb"/></svg></div></div>
</div>
</section>

<section class="pane prop">
<div class="phead"><h2 class="ptitle">设置</h2><div class="pbtns"><svg class="car12"><use href="#car"/></svg><svg class="pinbox"><use href="#pin"/></svg></div></div>
<div class="sub">二维绘图组</div>
<div class="ptools"><button class="d-flex align-items-center text-dark gap-1"><svg class="i13"><use href="#draw"/></svg>绘制</button><button aria-label="第一个"><svg class="i14"><use href="#afirst"/></svg></button><button aria-label="上一个"><svg class="i14"><use href="#aprev"/></svg></button><button aria-label="下一个" class="text-secondary"><svg class="i14"><use href="#anext"/></svg></button><button aria-label="最后一个" class="text-secondary"><svg class="i14"><use href="#alast"/></svg></button></div>
<div class="frow h42"><label class="w1" for="lb">标签:</label><input id="lb" class="txt" value="速度 (spf)"><button class="gbtn" aria-label="重命名"><svg class="i16"><use href="#gos"/></svg></button></div>
<button class="sec"><svg class="car10"><use href="#carD"/></svg>数据</button>
<div class="sbody">
<div class="frow h27"><label class="w2" for="ds">数据集:</label><select id="ds" class="sel1"><option>研究 1/解 1 (sol1)</option></select><button class="gbtn" aria-label="转到源"><svg class="i16"><use href="#gol"/></svg></button></div>
<div class="frow h27"><label class="w2" for="tm">时间 (s):</label><select id="tm" class="sel1"><option>6</option></select></div>
</div>
<button class="sec"><svg class="car10"><use href="#carR"/></svg>选择</button>
<button class="sec"><svg class="car10"><use href="#carR"/></svg>标题</button>
<button class="sec"><svg class="car10"><use href="#carD"/></svg>绘图设置</button>
<div class="sbody">
<div class="frow h27"><label class="w3" for="vw">视图:</label><select id="vw" class="sel1"><option>自动</option></select><button class="gbtn" aria-label="转到源"><svg class="i16"><use href="#gol"/></svg></button></div>
<div class="frow h25"><label class="w3" for="xl">x 轴标签:</label><input type="checkbox" class="ck me-3" id="xl"><input class="txt" aria-label="x 轴标签文本" disabled></div>
<div class="frow h25"><label class="w3" for="yl">y 轴标签:</label><input type="checkbox" class="ck me-3" id="yl"><input class="txt" aria-label="y 轴标签文本" disabled></div>
<div class="frow h22 tick"><input type="checkbox" class="ck" id="c1"><label for="c1">显示隐藏的实体</label></div>
<div class="frow h22 tick"><input type="checkbox" class="ck" id="c2"><label for="c2">将隐藏设置传播到较低维度</label></div>
<fieldset class="fs edges"><legend><input type="checkbox" class="ck" id="c3" checked><label for="c3">绘制数据集的边</label></legend>
<div class="frow h27"><label class="w4" for="co">颜色:</label><select id="co" class="sel1"><option>来自主题</option></select></div>
<div class="frow h27"><label class="w4" for="cs">坐标系:</label><select id="cs" class="sel1"><option>空间&nbsp; (x, y, z)</option></select></div></fieldset>
</div>
<button class="sec"><svg class="car10"><use href="#carD"/></svg>颜色图例</button>
<div class="sbody lead7">
<fieldset class="fs"><legend><input type="checkbox" class="ck" id="c4" checked><label for="c4">显示图例</label></legend>
<div class="frow h22 tick"><input type="checkbox" class="ck" id="c5"><label for="c5">显示最大值和最小值</label></div>
<div class="frow h22 tick"><input type="checkbox" class="ck" id="c6"><label for="c6">显示单位</label></div>
<div class="frow h27"><label class="w5" for="ps">位置:</label><select id="ps" class="sel1 legend-pos"><option>右</option></select></div>
<div class="frow h27"><label class="w5" for="tc">文本颜色:</label><select id="tc" class="sel1"><option>来自主题</option></select></div></fieldset>
</div>
<button class="sec"><svg class="car10"><use href="#carR"/></svg>数字格式</button>
<button class="sec"><svg class="car10"><use href="#carR"/></svg>绘图阵列</button>
<button class="sec"><svg class="car10"><use href="#carR"/></svg>窗口设置</button>
</section>

<div class="rightcol">
<section class="pane border-end-0 d-flex flex-column">
<div class="tabs2"><button class="tb cur">图形</button><button class="tb">探针图 &nbsp;“1”<svg class="far"><use href="#x"/></svg></button><button class="tb">收敛图 1<svg><use href="#x"/></svg></button></div>
<div class="gtools flex-shrink-0"><button aria-label="放大"><svg class="i14"><use href="#zi"/></svg></button><button aria-label="缩小"><svg class="i14"><use href="#zo"/></svg></button><button aria-label="缩放框" class="drop"><svg class="i16"><use href="#zb"/></svg><svg class="car"><use href="#car"/></svg></button><button aria-label="缩放到范围"><svg class="i16"><use href="#fit"/></svg></button><span class="vsep"></span><button aria-label="转到视图" class="drop"><svg class="i16"><use href="#axs"/></svg><svg class="car"><use href="#car"/></svg></button><span class="vsep wide"></span><span class="toggles"><button class="tog" aria-label="显示网格"><svg class="i16"><use href="#tg"/></svg></button><button class="tog" aria-label="显示图例"><svg class="i16"><use href="#tl"/></svg></button></span><button aria-label="环境" class="drop after"><svg class="i16"><use href="#aper"/></svg><svg class="car"><use href="#car"/></svg></button><button aria-label="快照"><svg class="i14"><use href="#cam"/></svg></button><button aria-label="打印"><svg class="i14"><use href="#prn"/></svg></button></div>
<div class="plot flex-grow-1">
<svg class="w-100" viewBox="805 190 518 505" role="img" aria-label="表面: 速度大小">
<defs>
<linearGradient id="jet" x1="0" y1="0" x2="0" y2="1"><stop offset="0" stop-color="#780000"/><stop offset=".09" stop-color="#c40000"/><stop offset=".17" stop-color="#e83000"/><stop offset=".25" stop-color="#e87800"/><stop offset=".35" stop-color="#e0e000"/><stop offset=".42" stop-color="#b4fa20"/><stop offset=".5" stop-color="#7cff80"/><stop offset=".6" stop-color="#3cf4dc"/><stop offset=".68" stop-color="#30cdff"/><stop offset=".78" stop-color="#3488ff"/><stop offset=".85" stop-color="#3050fa"/><stop offset=".93" stop-color="#2828cc"/><stop offset="1" stop-color="#19197e"/></linearGradient>
<path id="body2d" d="M910 494h17.500a16 16 0 0 0 16-16.500H995a16 16 0 0 0 16-16V427.500h17v34a16 16 0 0 0 16 16h51V495a16 16 0 0 0 16 16.500h18V527.500H943.500a16 16 0 0 0-16-16.500H910z"/>
<clipPath id="cut"><use href="#body2d"/></clipPath>
<filter id="b2" x="-50%" y="-50%" width="200%" height="200%"><feGaussianBlur stdDeviation="1.600"/></filter>
<filter id="b4" x="-50%" y="-50%" width="200%" height="200%"><feGaussianBlur stdDeviation="4"/></filter>
<filter id="b7" x="-50%" y="-50%" width="200%" height="200%"><feGaussianBlur stdDeviation="7"/></filter>
</defs>
<text x="820" y="214"><tspan class="zh">时间</tspan>=6 s</text><text x="1000" y="214"><tspan class="zh">表面</tspan>: <tspan class="zh">速度大小</tspan> (m/s)</text><text x="807" y="228" class="unit">m</text><text x="1250" y="690" class="unit">m</text>
<path d="M851.500 223.500h408v451h-408z" fill="none" stroke="#777"/>
<path d="M852 242.500h5m-5 42h5m-5 42h5m-5 42h5m-5 42h5m-5 42h5m-5 42h5m-5 42h5m-5 42h5m-5 42h5m-5 42h5M1254 242.500h5m-5 42h5m-5 42h5m-5 42h5m-5 42h5m-5 42h5m-5 42h5m-5 42h5m-5 42h5m-5 42h5m-5 42h5M859.500 224v5m84-5v5m84-5v5m84-5v5m84-5v5M859.500 669v5m84-5v5m84-5v5m84-5v5m84-5v5" stroke="#777"/>
<g text-anchor="end"><text x="848" y="246">0.03</text><text x="848" y="288">0.025</text><text x="848" y="330">0.02</text><text x="848" y="372">0.015</text><text x="848" y="414">0.01</text><text x="848" y="456">0.005</text><text x="848" y="498">0</text><text x="848" y="540">-0.005</text><text x="848" y="582">-0.01</text><text x="848" y="624">-0.015</text><text x="848" y="666">-0.02</text></g>
<g text-anchor="middle"><text x="860" y="690">-0.02</text><text x="944" y="690">-0.01</text><text x="1028" y="690">0</text><text x="1112" y="690">0.01</text><text x="1196" y="690">0.02</text></g>
<g clip-path="url(#cut)">
<path d="M905 420h230v115H905z" fill="#19197f"/>
<path d="M1010 455h26l14 24 40 2 8 28 34 0v22h-66q-44 2-60-20-6-30 4-56z" fill="#2a30e4" filter="url(#b7)"/>
<path d="M1010 460h22q4 20 26 22 26 4 38 26l34 0v18h-30q-48 4-72-14-18-22-18-52z" fill="#3560ff" filter="url(#b4)"/>
<path d="M1011 456h18q2 26 22 32 28 6 42 20l10 16q-42-2-62-15-24-18-30-53z" fill="#34c8fc" filter="url(#b4)"/>
<path d="M1012 468h15q2 14 6 18-10-2-15-5-5-5-6-13z" fill="#3ceee0" filter="url(#b2)"/>
<path d="M1070 508q20-3 34 2l30 0v18h-26q-24-3-38-20z" fill="#3ae0f4" filter="url(#b4)"/>
<path d="M1011 425h17v35q-2 12-8 19-7-7-9-19z" fill="#50f0d0" filter="url(#b2)"/>
<path d="M1011 425h17v32l-3 10q-5 14-10 0l-4-10z" fill="#b8f030" filter="url(#b2)"/>
<path d="M1009 420h21v34h-21z" fill="#e6dc0c" filter="url(#b2)"/><path d="M1011 426h17v26h-17z" fill="#e6dc0c"/>
<ellipse cx="1019.500" cy="464" rx="5" ry="10" fill="#f0a010" filter="url(#b2)"/><ellipse cx="1019.500" cy="463" rx="3.500" ry="6" fill="#dc1000" filter="url(#b2)"/>
<path d="M1084 513q10-4 24 0h25v14h-25q-14-2-24-14z" fill="#a8f040" filter="url(#b2)"/>
<path d="M1090 516q10-4 18-1h25v9h-25q-10 0-18-8z" fill="#f08800" filter="url(#b2)"/>
<path d="M1098 518q8-3 14-1h20v5h-20q-8 0-14-4z" fill="#a80000" stroke="#d00" filter="url(#b2)"/>
<path d="M1108 512h22M1108 527h22" stroke="#38a8f8" stroke-width="1.500"/>
</g>
<use href="#body2d" fill="none" stroke="#222"/>
<path d="M1279.500 251.500h15v418h-15z" fill="url(#jet)" stroke="#444" stroke-width=".6"/>
<path d="M1280 288.500h3m-3 54h3m-3 54h3m-3 55h3m-3 54h3m-3 55h3m-3 54h3M1291 288.500h3m-3 54h3m-3 54h3m-3 55h3m-3 54h3m-3 55h3m-3 54h3" stroke="#333" stroke-width=".8"/>
<text x="1303" y="292">14</text><text x="1303" y="346">12</text><text x="1303" y="401">10</text><text x="1303" y="455">8</text><text x="1303" y="510">6</text><text x="1303" y="564">4</text><text x="1303" y="619">2</text><text x="1303" y="673">0</text><text x="1295" y="244">×10<tspan dy="-4" class="sup">−4</tspan></text>
</svg></div>
</section>
<section class="pane border-end-0 border-bottom-0 d-flex flex-column">
<div class="tabs2"><button class="tb cur">消息<svg><use href="#x"/></svg></button><button class="tb">进度</button><button class="tb">日志</button><button class="tb">探针表 1<svg><use href="#x"/></svg></button></div>
<div class="mtools flex-shrink-0"><button aria-label="清除"><svg class="i16"><use href="#broom"/></svg></button><button class="tog" aria-label="显示消息窗口"><svg class="i16"><use href="#mail"/></svg></button></div>
<div class="log flex-grow-1">
<div>[2025年8月22日 下午2:21] 保存的文件：D:\Doc\Model_cosmol\pid\pid_control_geom_sequence.zh_CN.mph</div>
<div>[2025年8月22日 下午2:21] 保存的文件：D:\Doc\Model_cosmol\pid\pid_control_geom_sequence.zh_CN.mph</div>
<div>[2025年8月22日 下午2:21] 保存的文件：D:\Doc\Model_cosmol\pid\pid_control_geom_sequence.zh_CN.mph</div>
<div>[2025年8月22日 下午2:22] 完整网格包含 7302 个域单元和 418 个边界单元。</div>
<div>[2025年8月22日 下午2:22] 保存的文件：D:\Doc\Model_cosmol\pid\pid_control_geom_sequence.zh_CN.mph</div>
<div>[2025年8月22日 下午2:23] 保存的文件：D:\Doc\Model_cosmol\pid\pid_control_geom_sequence.zh_CN.mph</div>
<div>[2025年8月22日 下午2:23] 求解的自由度数：16815（加上 15041 个内部自由度）。</div>
<div>[2025年8月22日 下午2:24] 求解时间 (研究 1): 10 s。</div>
</div>
</section>
</div>
</main>
</body>
</html>
